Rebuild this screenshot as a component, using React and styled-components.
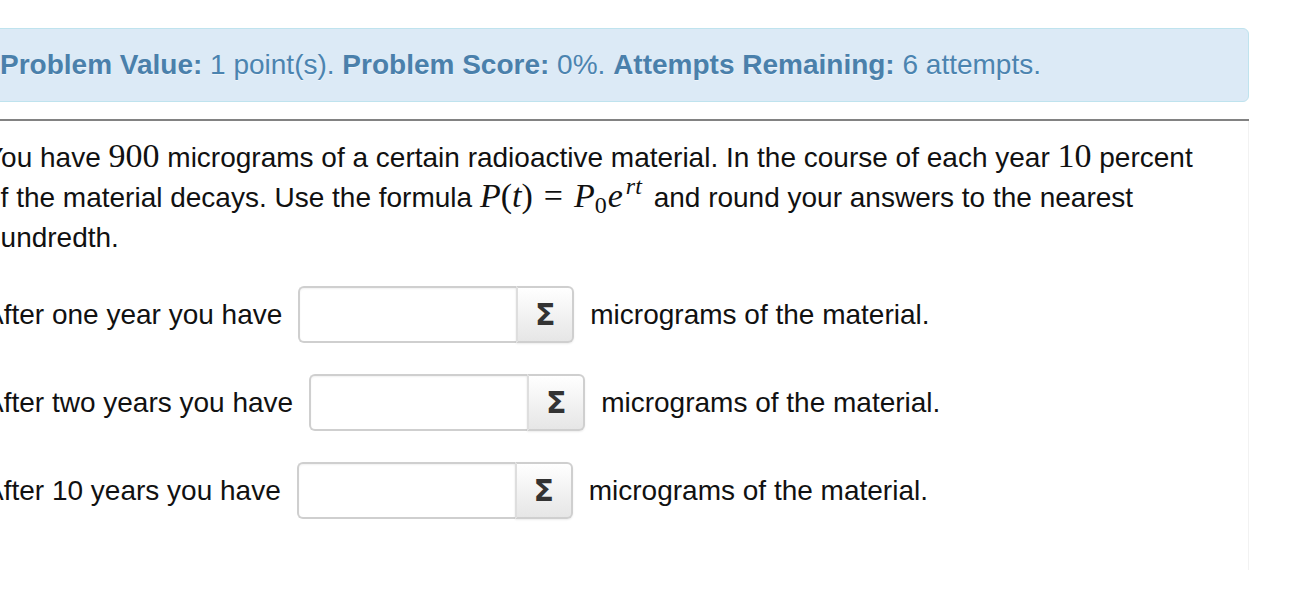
import styled, { createGlobalStyle } from "styled-components";

const GlobalStyle = createGlobalStyle`
    html, body {
        margin: 0;
        padding: 0;
        background: #fff;
        overflow: hidden;
    }
    body {
        font-family: "Liberation Sans", Arial, Helvetica, sans-serif;
        color: #111;
    }
`;

const answers = [
    { label: "After one year you have" },
    { label: "After two years you have" },
    { label: "After 10 years you have" },
];

export default function App() {
    return (
        <>
            <GlobalStyle />
            <Page>
                <Alert>
                    <b>Problem Value:</b> 1 point(s). <b>Problem Score:</b> 0%.{" "}
                    <b>Attempts Remaining:</b> 6 attempts.
                </Alert>
                <Rule />
                <Body>
                    <Text>
                        You have <MathNum>900</MathNum> micrograms of a certain radioactive
                        material. In the course of each year <MathNum>10</MathNum> percent
                        <br />
                        of the material decays. Use the formula{" "}
                        <Formula>
                            <i>P</i>(<i>t</i>)<Eq>=</Eq>
                            <i>P</i>
                            <Sub>0</Sub>
                            <i>e</i>
                            <Sup>rt</Sup>
                        </Formula>{" "}
                        and round your answers to the nearest
                        <br />
                        hundredth.
                    </Text>
                    {answers.map((a) => (
                        <AnswerRow key={a.label}>
                            <span>{a.label}</span>
                            <InputGroup>
                                <AnswerInput type="text" />
                                <SigmaButton type="button">Σ</SigmaButton>
                            </InputGroup>
                            <span>micrograms of the material.</span>
                        </AnswerRow>
                    ))}
                </Body>
            </Page>
        </>
    );
}

const Page = styled.div`
    margin-left: -16px;
    width: 1265px;
    padding-top: 28px;
`;

const Alert = styled.div`
    margin-left: -30px;
    padding: 19px 15px 19px 45px;
    background: #dceaf6;
    border: 1px solid #bfe3ee;
    border-radius: 6px;
    color: #4b84b0;
    font-size: 28px;
    line-height: 34px;
    text-shadow: 0 1px 0 rgba(255, 255, 255, 0.5);

    b {
        font-weight: 700;
        color: #4a80ab;
    }
`;

const Rule = styled.div`
    margin-top: 17px;
    height: 2px;
    background: #828282;
`;

const Body = styled.div`
    border-right: 1px solid #f2f2f2;
    padding: 17px 0 51px 1px;
`;

const Text = styled.p`
    margin: 0 0 28px;
    font-size: 28px;
    line-height: 40px;
    color: #111;
`;

const MathNum = styled.span`
    font-family: "Liberation Serif", "Times New Roman", serif;
    font-size: 34px;
    line-height: 1;
`;

const Formula = styled.span`
    font-family: "Liberation Serif", "Times New Roman", serif;
    font-size: 34px;
    line-height: 1;
    white-space: nowrap;
    margin-right: 4px;

    i {
        font-style: italic;
    }
`;

const Eq = styled.span`
    margin: 0 11px;
`;

const Sub = styled.sub`
    font-size: 24px;
    vertical-align: -6px;
    line-height: 0;
    margin-right: 1px;
`;

const Sup = styled.sup`
    font-size: 24px;
    font-style: italic;
    vertical-align: 13px;
    line-height: 0;
    margin-left: 3px;
`;

const AnswerRow = styled.div`
    display: flex;
    align-items: center;
    gap: 16px;
    height: 57px;
    font-size: 28px;
    color: #111;

    & + & {
        margin-top: 31px;
    }
`;

const InputGroup = styled.div`
    display: flex;
    height: 57px;
`;

const AnswerInput = styled.input`
    box-sizing: border-box;
    width: 218px;
    height: 57px;
    margin: 0;
    padding: 0 12px;
    border: 2px solid #cfcfcf;
    border-right: none;
    border-radius: 6px 0 0 6px;
    box-shadow: inset 0 1px 2px rgba(0, 0, 0, 0.06);
    font-size: 24px;
    font-family: inherit;
    outline: none;
`;

const SigmaButton = styled.button`
    box-sizing: border-box;
    width: 58px;
    height: 57px;
    margin: 0;
    padding: 0;
    border: 2px solid #cfcfcf;
    border-left: 2px solid #dedede;
    border-radius: 0 6px 6px 0;
    background: linear-gradient(#ffffff, #e6e6e6);
    box-shadow: 0 1px 2px rgba(0, 0, 0, 0.08);
    color: #333;
    font-family: "DejaVu Sans", "Liberation Sans", sans-serif;
    font-size: 30px;
    font-weight: 700;
    line-height: 1;
    cursor: pointer;
`;
